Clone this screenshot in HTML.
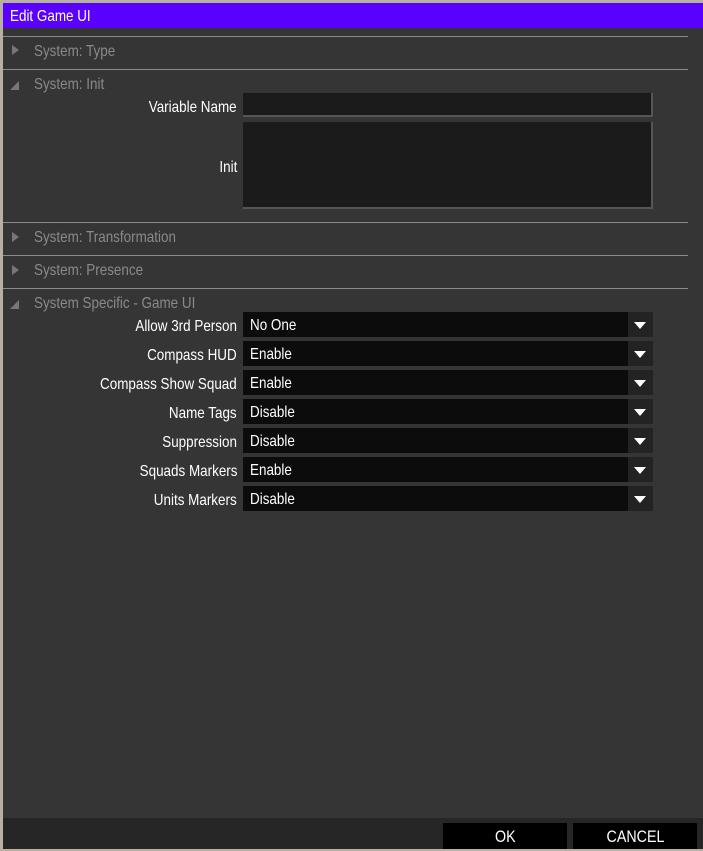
<!DOCTYPE html>
<html><head><style>
body{margin:0;width:703px;height:849px;background:#b8b0a0;overflow:hidden;font-family:"Liberation Sans",sans-serif;position:relative}
.win{position:absolute;left:3px;top:3px;width:700px;height:846px;background:#353535}
.n{display:inline-block;transform:scaleX(.84);transform-origin:left center;white-space:nowrap}
.title{position:absolute;left:0;top:0;width:700px;height:25px;background:#5a00ff;color:#fff;font-size:16px;line-height:27px;padding-left:7px;box-sizing:border-box}
.line{position:absolute;left:0;width:685px;height:1px;background:#8a8a8a}
.hdr{position:absolute;left:31px;color:#8a8a8a;font-size:16px;line-height:18px}
.tri{position:absolute;left:8px;width:0;height:0}
.tr{border-top:5px solid transparent;border-bottom:5px solid transparent;border-left:7px solid #777}
.td{border-left:9px solid transparent;border-bottom:9px solid #777}
.lbl{position:absolute;right:466px;color:#fff;font-size:16px;line-height:18px;text-align:right;white-space:nowrap}
.lbl .n{transform-origin:right center}
.inp{position:absolute;left:240px;width:408px;background:#1b1b1b;border-right:2px solid #555;border-bottom:2px solid #555}
.cb{position:absolute;left:240px;width:410px;height:25px;background:#0c0c0c}
.cb span{position:absolute;left:7px;top:5px;color:#fff;font-size:16px;line-height:18px}
.cb i{position:absolute;right:0;top:0;width:25px;height:25px;background:#232323}
.cb i:after{content:"";position:absolute;left:6px;top:10px;border-left:6px solid transparent;border-right:6px solid transparent;border-top:7px solid #fff}
.foot{position:absolute;left:0;top:815px;width:700px;height:31px;background:#262626}
.btn{position:absolute;top:5px;width:124px;height:26px;background:#000;color:#fff;font-size:17px;line-height:28px;text-align:center}
.btn .n{transform-origin:center center}
</style></head><body>
<div class="win">
<div class="title"><span class="n">Edit Game UI</span></div>
<div class="line" style="top:33px"></div>
<div class="tri tr" style="top:42px;left:9px"></div><div class="hdr" style="top:40px"><span class="n">System: Type</span></div>
<div class="line" style="top:66px"></div>
<div class="tri td" style="top:78px;left:7px"></div><div class="hdr" style="top:73px"><span class="n">System: Init</span></div>
<div class="lbl" style="top:96px"><span class="n">Variable Name</span></div>
<div class="inp" style="top:90px;height:22px"></div>
<div class="lbl" style="top:156px"><span class="n">Init</span></div>
<div class="inp" style="top:119px;height:85px"></div>
<div class="line" style="top:219px"></div>
<div class="tri tr" style="top:229px;left:9px"></div><div class="hdr" style="top:226px"><span class="n">System: Transformation</span></div>
<div class="line" style="top:252px"></div>
<div class="tri tr" style="top:262px;left:9px"></div><div class="hdr" style="top:259px"><span class="n">System: Presence</span></div>
<div class="line" style="top:285px"></div>
<div class="tri td" style="top:297px;left:7px"></div><div class="hdr" style="top:292px"><span class="n">System Specific - Game UI</span></div>

<div class="lbl" style="top:315px"><span class="n">Allow 3rd Person</span></div><div class="cb" style="top:309px"><span class="n">No One</span><i></i></div>
<div class="lbl" style="top:344px"><span class="n">Compass HUD</span></div><div class="cb" style="top:338px"><span class="n">Enable</span><i></i></div>
<div class="lbl" style="top:373px"><span class="n">Compass Show Squad</span></div><div class="cb" style="top:367px"><span class="n">Enable</span><i></i></div>
<div class="lbl" style="top:402px"><span class="n">Name Tags</span></div><div class="cb" style="top:396px"><span class="n">Disable</span><i></i></div>
<div class="lbl" style="top:431px"><span class="n">Suppression</span></div><div class="cb" style="top:425px"><span class="n">Disable</span><i></i></div>
<div class="lbl" style="top:460px"><span class="n">Squads Markers</span></div><div class="cb" style="top:454px"><span class="n">Enable</span><i></i></div>
<div class="lbl" style="top:489px"><span class="n">Units Markers</span></div><div class="cb" style="top:483px"><span class="n">Disable</span><i></i></div>

<div class="foot">
<div class="btn" style="left:440px"><span class="n">OK</span></div>
<div class="btn" style="left:570px"><span class="n">CANCEL</span></div>
</div>
</div>
</body></html>
